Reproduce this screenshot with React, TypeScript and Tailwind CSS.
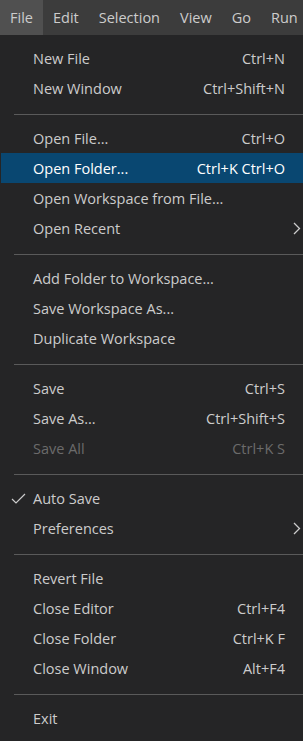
import React from 'react';

type Item =
  | { kind: 'sep' }
  | {
      kind: 'item';
      label: string;
      shortcut?: string;
      active?: boolean;
      disabled?: boolean;
      checked?: boolean;
      submenu?: boolean;
    };

const MENU_BAR = ['File', 'Edit', 'Selection', 'View', 'Go', 'Run'];

const ITEMS: Item[] = [
  { kind: 'item', label: 'New File', shortcut: 'Ctrl+N' },
  { kind: 'item', label: 'New Window', shortcut: 'Ctrl+Shift+N' },
  { kind: 'sep' },
  { kind: 'item', label: 'Open File...', shortcut: 'Ctrl+O' },
  { kind: 'item', label: 'Open Folder...', shortcut: 'Ctrl+K Ctrl+O', active: true },
  { kind: 'item', label: 'Open Workspace from File...' },
  { kind: 'item', label: 'Open Recent', submenu: true },
  { kind: 'sep' },
  { kind: 'item', label: 'Add Folder to Workspace...' },
  { kind: 'item', label: 'Save Workspace As...' },
  { kind: 'item', label: 'Duplicate Workspace' },
  { kind: 'sep' },
  { kind: 'item', label: 'Save', shortcut: 'Ctrl+S' },
  { kind: 'item', label: 'Save As...', shortcut: 'Ctrl+Shift+S' },
  { kind: 'item', label: 'Save All', shortcut: 'Ctrl+K S', disabled: true },
  { kind: 'sep' },
  { kind: 'item', label: 'Auto Save', checked: true },
  { kind: 'item', label: 'Preferences', submenu: true },
  { kind: 'sep' },
  { kind: 'item', label: 'Revert File' },
  { kind: 'item', label: 'Close Editor', shortcut: 'Ctrl+F4' },
  { kind: 'item', label: 'Close Folder', shortcut: 'Ctrl+K F' },
  { kind: 'item', label: 'Close Window', shortcut: 'Alt+F4' },
  { kind: 'sep' },
  { kind: 'item', label: 'Exit' },
];

const Check = () => (
  <svg width="15" height="11" viewBox="0 0 15 11" fill="none" className="absolute left-[10px] top-[10px]">
    <path d="M1 6l4 4 9-9" stroke="#cccccc" strokeWidth="1.2" />
  </svg>
);

const Chevron = () => (
  <svg width="8" height="13" viewBox="0 0 8 13" fill="none" className="absolute right-[2px] top-[9px]">
    <path d="M1 1l5.5 5.5L1 12" stroke="#cccccc" strokeWidth="1.3" />
  </svg>
);

export default function App() {
  return (
    <div
      className="w-[303px] h-[741px] overflow-hidden bg-[#252526] text-[#cccccc] text-[14.5px]"
      style={{ fontFamily: '"Open Sans", "Noto Sans", sans-serif' }}
    >
      {/* menu bar */}
      <div className="flex h-[35px] bg-[#3c3c3c] whitespace-nowrap">
        {MENU_BAR.map((m, i) => (
          <div
            key={m}
            className={`flex items-center px-[10px] ${i === 0 ? 'bg-[#505050]' : ''}`}
          >
            {m}
          </div>
        ))}
      </div>

      {/* dropdown */}
      <div className="pt-[8px]">
        {ITEMS.map((it, i) =>
          it.kind === 'sep' ? (
            <div key={i} className="h-[20px] pl-[14px] pt-[11px]">
              <div className="h-px bg-[#5a5a5a]" />
            </div>
          ) : (
            <div
              key={i}
              className={`relative flex items-center justify-between h-[30px] ml-px pl-[32px] pr-[18px] pt-[2px] ${
                it.active ? 'bg-[#094771] text-white' : ''
              } ${it.disabled ? 'text-[#6b6b6b]' : ''}`}
            >
              {it.checked && <Check />}
              <span>{it.label}</span>
              {it.shortcut && <span>{it.shortcut}</span>}
              {it.submenu && <Chevron />}
            </div>
          ),
        )}
      </div>
    </div>
  );
}
